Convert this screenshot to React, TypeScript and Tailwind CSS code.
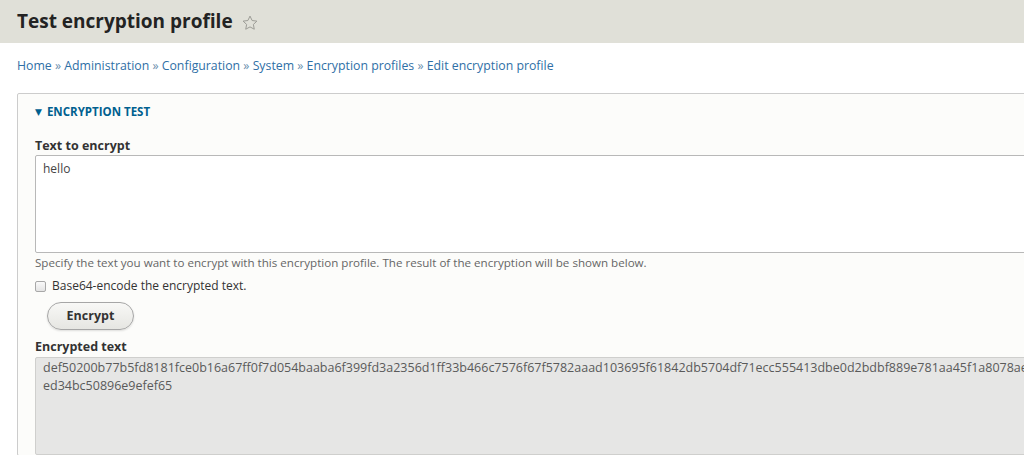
const hexFirst =
  "def50200b77b5fd8181fce0b16a67ff0f7d054baaba6f399fd3a2356d1ff33b466c7576f67f5782aaad103695f61842db5704df71ecc555413dbe0d2bdbf889e781aa45f1a8078ae3c0b2f74d19";
const hexSecond = "ed34bc50896e9efef65";

const crumbs = [
  "Home",
  "Administration",
  "Configuration",
  "System",
  "Encryption profiles",
  "Edit encryption profile",
];

function Star() {
  return (
    <svg width="18" height="18" viewBox="0 0 24 24" className="ml-2 mt-[2px]">
      <path
        d="M12 2.8l2.8 5.9 6.4.8-4.7 4.4 1.2 6.4L12 17.2l-5.7 3.1 1.2-6.4-4.7-4.4 6.4-.8z"
        fill="none"
        stroke="#9a9a94"
        strokeWidth="1.3"
        strokeLinejoin="round"
      />
    </svg>
  );
}

export default function App() {
  return (
    <div
      className="h-[455px] overflow-hidden bg-white text-[#333]"
      style={{ fontFamily: '"Open Sans", "DejaVu Sans", sans-serif' }}
    >
      <div className="h-[43px] bg-[#e0e0d8] px-[17px] flex items-center">
        <h1 className="text-[19px] font-bold text-[#232323] leading-none">
          Test encryption profile
        </h1>
        <Star />
      </div>

      <nav className="px-[17px] pt-[15px] text-[12.3px] leading-[16px] text-[#2f6fa6] whitespace-nowrap">
        {crumbs.map((c, i) => (
          <span key={c}>
            {i > 0 && <span className="text-[#6a8fae]"> » </span>}
            <a href="#">{c}</a>
          </span>
        ))}
      </nav>

      <div className="ml-[17px] mt-[19px] w-[1120px] border border-[#ccc] rounded-[2px] bg-[#fcfcfa] pl-[17px] pr-[17px] pt-[10px]">
        <div className="flex items-center text-[11.5px] font-bold uppercase text-[#00608f] leading-[16px]">
          <span className="text-[9px] mr-[5px]">▼</span>
          Encryption test
        </div>

        <div className="mt-[18px] text-[12.5px] font-bold leading-[16px] text-[#333]">
          Text to encrypt
        </div>
        <div className="mt-[1px] h-[98px] bg-white border border-[#b8b8b8] rounded-[2px] px-[7px] py-[4px] text-[12px] leading-[18px] text-[#444]">
          hello
        </div>
        <div className="mt-[3px] text-[11.6px] leading-[14px] text-[#666]">
          Specify the text you want to encrypt with this encryption profile. The result of the
          encryption will be shown below.
        </div>

        <label className="mt-[8px] flex items-center text-[12px] leading-[16px] text-[#333]">
          <span className="w-[11px] h-[11px] rounded-[2px] border border-[#a8a8a8] bg-gradient-to-b from-[#fafafa] to-[#e4e4e4] mr-[6px]" />
          Base64-encode the encrypted text.
        </label>

        <button className="mt-[8px] ml-[12px] h-[28px] w-[87px] rounded-full border border-[#a6a6a6] bg-gradient-to-b from-[#f8f8f6] to-[#e6e6e2] text-[12.5px] font-bold text-[#333] shadow-[0_1px_2px_rgba(0,0,0,0.12)]">
          Encrypt
        </button>

        <div className="mt-[9px] text-[12.5px] font-bold leading-[16px] text-[#333]">
          Encrypted text
        </div>
        <div className="mt-[2px] h-[98px] bg-[#e6e6e5] border border-[#cfcfcd] rounded-[2px] px-[7px] pt-[1px] text-[12.5px] leading-[18px] text-[#5a5a5a] whitespace-nowrap">
          <div>{hexFirst}</div>
          <div>{hexSecond}</div>
        </div>
      </div>
    </div>
  );
}
